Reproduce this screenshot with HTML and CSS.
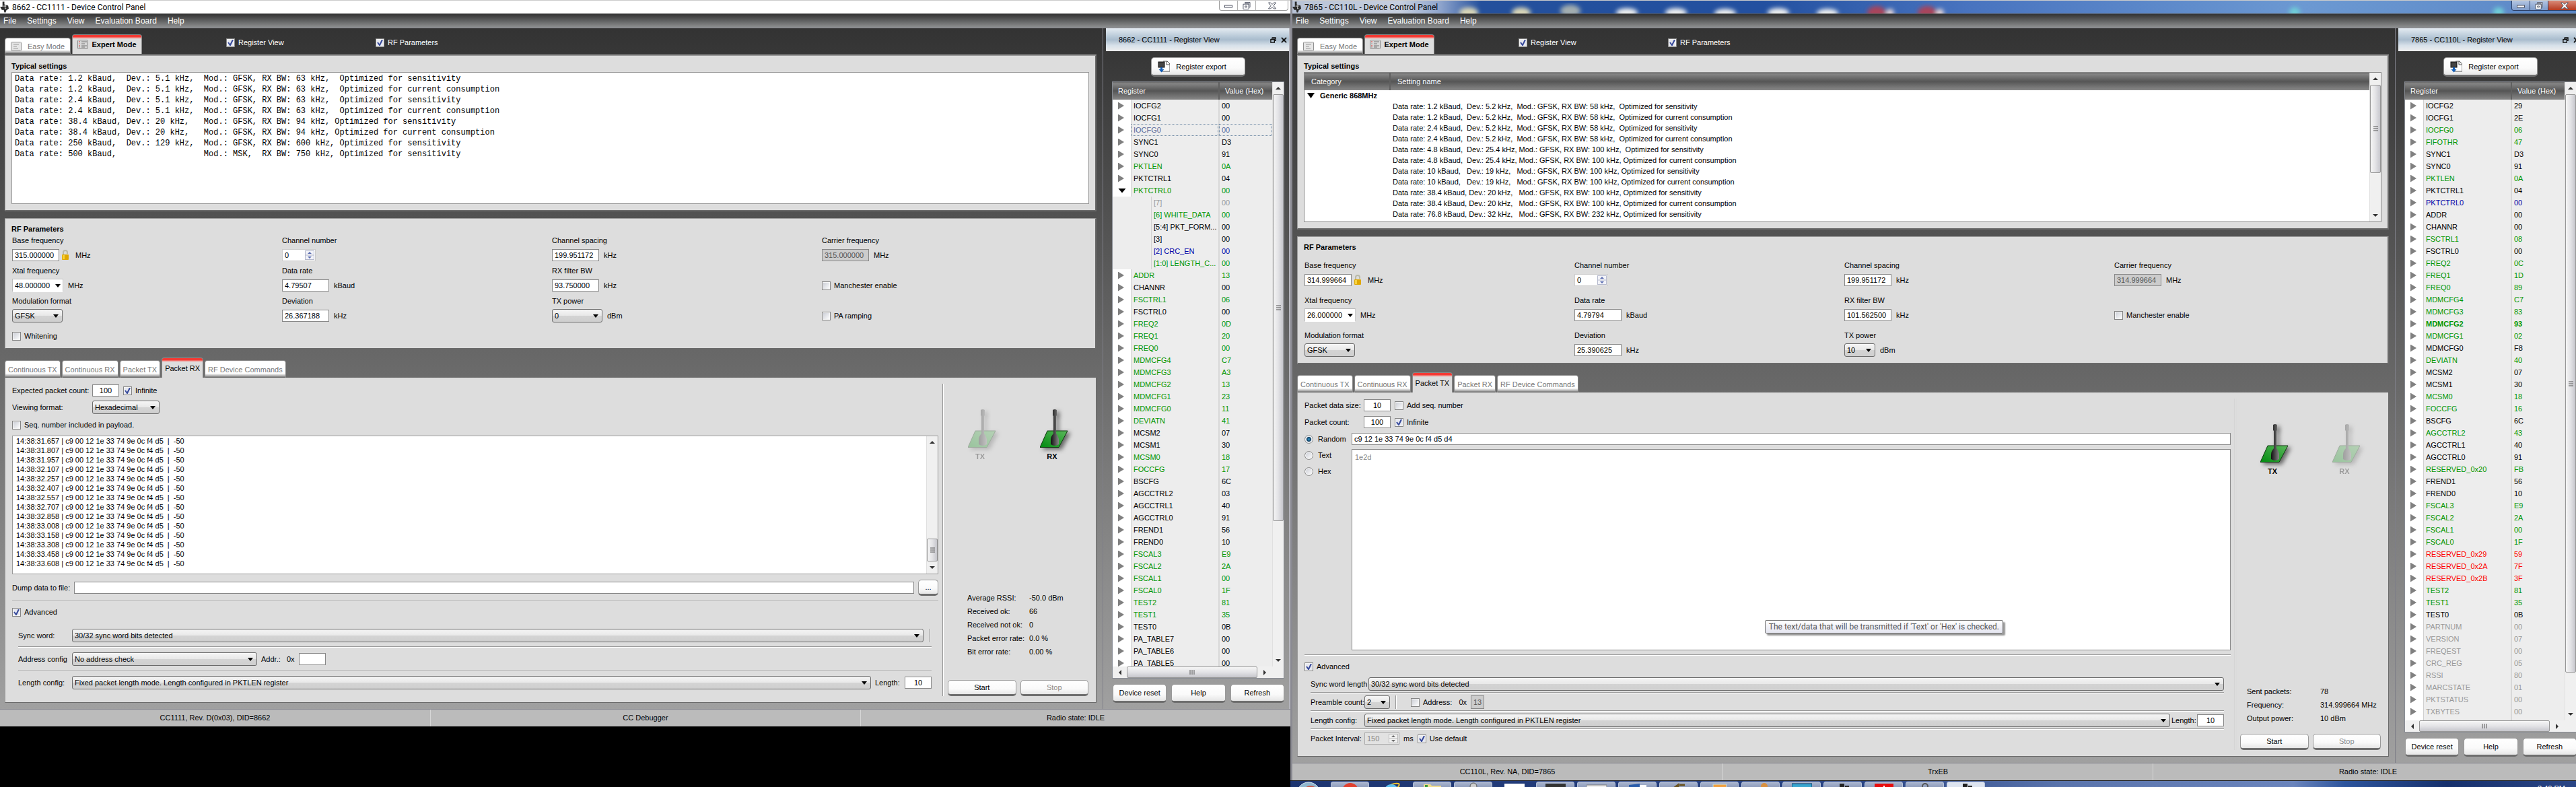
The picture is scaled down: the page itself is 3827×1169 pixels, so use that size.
FILE: index.html
```html
<!DOCTYPE html>
<html lang="en">
<head>
<meta charset="utf-8">
<title>Device Control Panel</title>
<link rel="stylesheet" href="styles.css">
</head>
<body>
<svg class="defs" aria-hidden="true">
  <defs>
    <linearGradient id="board" x1="0" y1="1" x2="1" y2="0"><stop offset="0" stop-color="#008a0e"/><stop offset="1" stop-color="#5cb85c"/></linearGradient>
    <linearGradient id="rod" x1="0" x2="1"><stop offset="0" stop-color="#111"/><stop offset=".6" stop-color="#555"/><stop offset="1" stop-color="#888"/></linearGradient>
    <filter id="soft"><feGaussianBlur stdDeviation="3"/></filter>
  </defs>
  <symbol id="ti" viewBox="0 0 14 17"><path d="M4 0h3v4l2 1 4 1 1 5-4 3-1 3H7l-1-4-3 0-3-5h4z" fill="#2b2b2b"/><path d="M7 5l2 0-1 6 2 0M5 7h5" stroke="#ddd" fill="none"/></symbol>
  <symbol id="easy" viewBox="0 0 16 14"><rect x=".5" y=".5" width="15" height="13" rx="1" fill="#e6e6e6" stroke="#909090"/><path d="M4 4h8M4 7h5M4 10h7" stroke="#999"/></symbol>
  <symbol id="expert" viewBox="0 0 16 14"><rect x=".5" y=".5" width="15" height="13" rx="1" fill="#d8d8d8" stroke="#8a8a8a"/><path d="M6 3h8M6 6h5M6 9h8M6 11h5" stroke="#777"/><path d="M2 3h2M2 9h2" stroke="#e03030"/><path d="M2 6h2M2 11h2" stroke="#999"/></symbol>
  <symbol id="lock" viewBox="0 0 12 16"><path d="M3 8V4a3 3 0 0 1 6 0v2" fill="none" stroke="#b9b9a8" stroke-width="2"/><rect x="1" y="7" width="10" height="8" rx="1" fill="#e0a800"/><rect x="2" y="8" width="3" height="6" fill="#f7d23c"/></symbol>
  <symbol id="export" viewBox="0 0 18 18"><path d="M8 1h6l4 4v11H6" fill="#fff" stroke="#555"/><path d="M13 1v5h5" fill="none" stroke="#555"/><rect x="1" y="2" width="9" height="8" fill="#444" stroke="#111"/><path d="M4 10h3v3h2.500l-4 4.500-4-4.500H4z" fill="#1560b8"/></symbol>
  <symbol id="antenna" viewBox="0 0 48 62"><path d="M0 56.500L11 32H41L28 56.500z" fill="url(#board)" stroke="#113a11"/><path d="M19 1q3-2 6 0v8l-1 1v26q4 5 4 10v6q-6 4-12 0v-6q0-6 4-10V10l-1-1z" fill="url(#rod)"/></symbol>
  <symbol id="restore" viewBox="0 0 10 10"><path d="M3 1h6v5H7M3 1v2M3 2h6" fill="none" stroke="#111" stroke-width="1.500"/><rect x="1" y="4" width="6" height="5" fill="none" stroke="#111" stroke-width="1.500"/></symbol>
  <symbol id="close" viewBox="0 0 10 10"><path d="M1 1l8 8M9 1l-8 8" stroke="#111" stroke-width="2"/></symbol>
  <symbol id="wmin" viewBox="0 0 12 10"><rect x=".5" y="4.500" width="11" height="3" fill="#fff" stroke="#4c5161"/></symbol>
  <symbol id="wmax" viewBox="0 0 12 12"><path d="M3.500.5h8v8h-2v-6h-6z" fill="#fff" stroke="#4c5161"/><path d="M.5 3.500h9v8h-9zM3.500 6.500h3v2h-3z" fill="#fff" stroke="#4c5161"/></symbol>
  <symbol id="wclose" viewBox="0 0 12 10"><path d="M.5.500h3L6 3 8.500.5h3L8 5l3.500 4.500h-3L6 7 3.500 9.500h-3L4 5z" fill="#fff" stroke="#4c5161"/></symbol>
</svg>

<div class="desktop">
<!-- First device: CC1111 -->
<section class="screen">
  <div class="window">
    <header class="titlebar">
      <svg class="logo"><use href="#ti"/></svg><h1>8662 - CC1111 - Device Control Panel</h1>
      <div class="winbtns"><button aria-label="Minimize"><svg><use href="#wmin"/></svg></button><button aria-label="Restore"><svg><use href="#wmax"/></svg></button><button class="x" aria-label="Close"><svg><use href="#wclose"/></svg></button></div>
    </header>
    <nav class="menubar"><a href="#">File</a><a href="#">Settings</a><a href="#">View</a><a href="#">Evaluation Board</a><a href="#">Help</a></nav>
    <div class="work">
      <main class="main">
        <div class="modes">
          <button class="tab"><svg><use href="#easy"/></svg>Easy Mode</button>
          <button class="tab on"><svg><use href="#expert"/></svg>Expert Mode</button>
          <label class="check"><input type="checkbox" checked>Register View</label>
          <label class="check"><input type="checkbox" checked>RF Parameters</label>
        </div>
        <section class="panel first">
          <h2>Typical settings</h2>
<pre class="list">Data rate: 1.2 kBaud,  Dev.: 5.1 kHz,  Mod.: GFSK, RX BW: 63 kHz,  Optimized for sensitivity
Data rate: 1.2 kBaud,  Dev.: 5.1 kHz,  Mod.: GFSK, RX BW: 63 kHz,  Optimized for current consumption
Data rate: 2.4 kBaud,  Dev.: 5.1 kHz,  Mod.: GFSK, RX BW: 63 kHz,  Optimized for sensitivity
Data rate: 2.4 kBaud,  Dev.: 5.1 kHz,  Mod.: GFSK, RX BW: 63 kHz,  Optimized for current consumption
Data rate: 38.4 kBaud, Dev.: 20 kHz,   Mod.: GFSK, RX BW: 94 kHz, Optimized for sensitivity
Data rate: 38.4 kBaud, Dev.: 20 kHz,   Mod.: GFSK, RX BW: 94 kHz, Optimized for current consumption
Data rate: 250 kBaud,  Dev.: 129 kHz,  Mod.: GFSK, RX BW: 600 kHz, Optimized for sensitivity
Data rate: 500 kBaud,                  Mod.: MSK,  RX BW: 750 kHz, Optimized for sensitivity</pre>
        </section>
        <section class="panel">
          <h2>RF Parameters</h2>
          <div class="params">
            <div class="field"><label for="a1">Base frequency</label><div><input id="a1" class="num" value="315.000000"><svg class="lock"><use href="#lock"/></svg>MHz</div></div>
            <div class="field"><label for="a2">Channel number</label><div><span class="spin"><input id="a2" value="0"><i></i></span></div></div>
            <div class="field"><label for="a3">Channel spacing</label><div><input id="a3" class="num" value="199.951172">kHz</div></div>
            <div class="field"><label for="a4">Carrier frequency</label><div><input id="a4" class="num" value="315.000000" disabled>MHz</div></div>
            <div class="field"><label for="a5">Xtal frequency</label><div><select id="a5" class="flat"><option>48.000000</option></select>MHz</div></div>
            <div class="field"><label for="a6">Data rate</label><div><input id="a6" class="num" value="4.79507">kBaud</div></div>
            <div class="field"><label for="a7">RX filter BW</label><div><input id="a7" class="num" value="93.750000">kHz</div></div>
            <div class="field end"><label class="check"><input type="checkbox">Manchester enable</label></div>
            <div class="field"><label for="a8">Modulation format</label><div><select id="a8" class="w75"><option>GFSK</option></select></div></div>
            <div class="field"><label for="a9">Deviation</label><div><input id="a9" class="num" value="26.367188">kHz</div></div>
            <div class="field"><label for="a10">TX power</label><div><select id="a10" class="w75"><option>0</option></select>dBm</div></div>
            <div class="field end"><label class="check"><input type="checkbox">PA ramping</label></div>
          </div>
          <label class="check whitening"><input type="checkbox">Whitening</label>
        </section>
        <div class="tabs"><button class="tab">Continuous TX</button><button class="tab">Continuous RX</button><button class="tab">Packet TX</button><button class="tab on">Packet RX</button><button class="tab">RF Device Commands</button></div>
        <section class="packet">
          <div class="form">
            <div class="row"><label class="l113" for="b1">Expected packet count:</label><input id="b1" class="short" value="100"><label class="check"><input type="checkbox" checked>Infinite</label></div>
            <div class="row t5"><label class="l113" for="b2">Viewing format:</label><select id="b2" class="w100"><option>Hexadecimal</option></select></div>
            <label class="check t8"><input type="checkbox">Seq. number included in payload.</label>
            <div class="log t8"><pre>14:38:31.657 | c9 00 12 1e 33 74 9e 0c f4 d5  |  -50
14:38:31.807 | c9 00 12 1e 33 74 9e 0c f4 d5  |  -50
14:38:31.957 | c9 00 12 1e 33 74 9e 0c f4 d5  |  -50
14:38:32.107 | c9 00 12 1e 33 74 9e 0c f4 d5  |  -50
14:38:32.257 | c9 00 12 1e 33 74 9e 0c f4 d5  |  -50
14:38:32.407 | c9 00 12 1e 33 74 9e 0c f4 d5  |  -50
14:38:32.557 | c9 00 12 1e 33 74 9e 0c f4 d5  |  -50
14:38:32.707 | c9 00 12 1e 33 74 9e 0c f4 d5  |  -50
14:38:32.858 | c9 00 12 1e 33 74 9e 0c f4 d5  |  -50
14:38:33.008 | c9 00 12 1e 33 74 9e 0c f4 d5  |  -50
14:38:33.158 | c9 00 12 1e 33 74 9e 0c f4 d5  |  -50
14:38:33.308 | c9 00 12 1e 33 74 9e 0c f4 d5  |  -50
14:38:33.458 | c9 00 12 1e 33 74 9e 0c f4 d5  |  -50
14:38:33.608 | c9 00 12 1e 33 74 9e 0c f4 d5  |  -50</pre><div class="vbar"><i class="up"></i><span style="flex-grow:92"></span><b style="flex-grow:22"></b><i class="down"></i></div></div>
            <div class="row t8 tall"><label class="l86" for="b3">Dump data to file:</label><input id="b3" class="grow"><button class="btn dots">...</button></div>
            <hr class="t6">
            <label class="check t8"><input type="checkbox" checked>Advanced</label>
            <div class="sub">
              <div class="row t17"><label class="l74" for="b4">Sync word:</label><select id="b4" class="grow"><option>30/32 sync word bits detected</option></select><span class="vr"></span></div>
              <hr class="t6">
              <div class="row t7"><label class="l74" for="b5">Address config</label><select id="b5" class="w275"><option>No address check</option></select><label for="b6">Addr.: &nbsp; 0x</label><input id="b6" class="short"></div>
              <hr class="t6">
              <div class="row t7"><label class="l74" for="b7">Length config:</label><select id="b7" class="grow"><option>Fixed packet length mode. Length configured in PKTLEN register</option></select><label for="b8" class="len">Length:</label><input id="b8" class="short" value="10"></div>
            </div>
          </div>
          <aside class="side">
            <div class="radios"><figure class="off"><svg><use href="#antenna"/></svg><figcaption>TX</figcaption></figure><figure><svg><use href="#antenna"/></svg><figcaption>RX</figcaption></figure></div>
            <dl class="stats rx"><dt>Average RSSI:</dt><dd>-50.0 dBm</dd><dt>Received ok:</dt><dd>66</dd><dt>Received not ok:</dt><dd>0</dd><dt>Packet error rate:</dt><dd>0.0 %</dd><dt>Bit error rate:</dt><dd>0.00 %</dd></dl>
            <div class="pair"><button class="btn">Start</button><button class="btn" disabled>Stop</button></div>
          </aside>
        </section>
      </main>
      <aside class="dock">
        <header><h2>8662 - CC1111 - Register View</h2><svg><use href="#restore"/></svg><svg><use href="#close"/></svg></header>
        <button class="btn export"><svg><use href="#export"/></svg>Register export</button>
        <div class="regs">
          <div class="regview"><table><thead><tr><th>Register</th><th>Value (Hex)</th></tr></thead><tbody id="regs-cc1111"></tbody></table></div>
          <div class="vbar"><i class="up"></i><b style="flex-grow:637"></b><span style="flex-grow:199"></span><i class="down"></i></div>
          <div class="hbar"><i class="left"></i><b></b><i class="right"></i></div>
        </div>
        <div class="trio"><button class="btn">Device reset</button><button class="btn">Help</button><button class="btn">Refresh</button></div>
      </aside>
    </div>
    <footer class="status"><span>CC1111, Rev. D(0x03), DID=8662</span><span>CC Debugger</span><span>Radio state: IDLE</span></footer>
  </div>
</section>

<!-- Second device: CC110L -->
<section class="screen second">
  <div class="window glass">
    <header class="titlebar">
      <svg class="blobs"><g filter="url(#soft)"><g fill="#d9d6b8"><ellipse cx="262" cy="18" rx="14" ry="8"/><ellipse cx="340" cy="18" rx="14" ry="8"/><ellipse cx="413" cy="15" rx="15" ry="9" opacity=".7"/></g><g fill="#eef0f0"><ellipse cx="497" cy="18" rx="16" ry="7"/><ellipse cx="570" cy="18" rx="16" ry="7"/><ellipse cx="643" cy="19" rx="16" ry="7"/><ellipse cx="722" cy="18" rx="16" ry="7"/><ellipse cx="795" cy="19" rx="16" ry="7"/></g><g fill="#a8455c"><ellipse cx="868" cy="18" rx="14" ry="10"/><ellipse cx="943" cy="18" rx="14" ry="10"/></g><g fill="#e8d8d8"><ellipse cx="888" cy="19" rx="6" ry="7"/><ellipse cx="962" cy="19" rx="6" ry="7"/></g><g fill="#6fd0d8"><ellipse cx="1489" cy="17" rx="8" ry="7"/><ellipse cx="1792" cy="17" rx="8" ry="7"/></g></g></svg>
      <svg class="logo"><use href="#ti"/></svg><h1>7865 - CC110L - Device Control Panel</h1>
      <div class="winbtns"><button aria-label="Minimize"><svg><use href="#wmin"/></svg></button><button aria-label="Restore"><svg><use href="#wmax"/></svg></button><button class="x" aria-label="Close"><svg><use href="#wclose"/></svg></button></div>
    </header>
    <nav class="menubar"><a href="#">File</a><a href="#">Settings</a><a href="#">View</a><a href="#">Evaluation Board</a><a href="#">Help</a></nav>
    <div class="work">
      <main class="main">
        <div class="modes">
          <button class="tab"><svg><use href="#easy"/></svg>Easy Mode</button>
          <button class="tab on"><svg><use href="#expert"/></svg>Expert Mode</button>
          <label class="check"><input type="checkbox" checked>Register View</label>
          <label class="check"><input type="checkbox" checked>RF Parameters</label>
        </div>
        <section class="panel first">
          <h2>Typical settings</h2>
          <div class="settings">
            <table>
              <thead><tr><th>Category</th><th>Setting name</th></tr></thead>
              <tbody>
                <tr class="cat"><td colspan="2"><i class="open"></i>Generic 868MHz</td></tr>
                <tr><td></td><td>Data rate: 1.2 kBaud,  Dev.: 5.2 kHz,  Mod.: GFSK, RX BW: 58 kHz,  Optimized for sensitivity</td></tr>
                <tr><td></td><td>Data rate: 1.2 kBaud,  Dev.: 5.2 kHz,  Mod.: GFSK, RX BW: 58 kHz,  Optimized for current consumption</td></tr>
                <tr><td></td><td>Data rate: 2.4 kBaud,  Dev.: 5.2 kHz,  Mod.: GFSK, RX BW: 58 kHz,  Optimized for sensitivity</td></tr>
                <tr><td></td><td>Data rate: 2.4 kBaud,  Dev.: 5.2 kHz,  Mod.: GFSK, RX BW: 58 kHz,  Optimized for current consumption</td></tr>
                <tr><td></td><td>Data rate: 4.8 kBaud,  Dev.: 25.4 kHz, Mod.: GFSK, RX BW: 100 kHz,  Optimized for sensitivity</td></tr>
                <tr><td></td><td>Data rate: 4.8 kBaud,  Dev.: 25.4 kHz, Mod.: GFSK, RX BW: 100 kHz, Optimized for current consumption</td></tr>
                <tr><td></td><td>Data rate: 10 kBaud,   Dev.: 19 kHz,   Mod.: GFSK, RX BW: 100 kHz, Optimized for sensitivity</td></tr>
                <tr><td></td><td>Data rate: 10 kBaud,   Dev.: 19 kHz,   Mod.: GFSK, RX BW: 100 kHz, Optimized for current consumption</td></tr>
                <tr><td></td><td>Data rate: 38.4 kBaud, Dev.: 20 kHz,   Mod.: GFSK, RX BW: 100 kHz, Optimized for sensitivity</td></tr>
                <tr><td></td><td>Data rate: 38.4 kBaud, Dev.: 20 kHz,   Mod.: GFSK, RX BW: 100 kHz, Optimized for current consumption</td></tr>
                <tr><td></td><td>Data rate: 76.8 kBaud, Dev.: 32 kHz,   Mod.: GFSK, RX BW: 232 kHz, Optimized for sensitivity</td></tr>
              </tbody>
            </table>
            <div class="vbar"><i class="up"></i><b style="flex-grow:130"></b><span style="flex-grow:55"></span><i class="down"></i></div>
          </div>
        </section>
        <section class="panel roomy">
          <h2>RF Parameters</h2>
          <div class="params">
            <div class="field"><label for="c1">Base frequency</label><div><input id="c1" class="num" value="314.999664"><svg class="lock"><use href="#lock"/></svg>MHz</div></div>
            <div class="field"><label for="c2">Channel number</label><div><span class="spin"><input id="c2" value="0"><i></i></span></div></div>
            <div class="field"><label for="c3">Channel spacing</label><div><input id="c3" class="num" value="199.951172">kHz</div></div>
            <div class="field"><label for="c4">Carrier frequency</label><div><input id="c4" class="num" value="314.999664" disabled>MHz</div></div>
            <div class="field"><label for="c5">Xtal frequency</label><div><select id="c5" class="flat"><option>26.000000</option></select>MHz</div></div>
            <div class="field"><label for="c6">Data rate</label><div><input id="c6" class="num" value="4.79794">kBaud</div></div>
            <div class="field"><label for="c7">RX filter BW</label><div><input id="c7" class="num" value="101.562500">kHz</div></div>
            <div class="field end"><label class="check"><input type="checkbox">Manchester enable</label></div>
            <div class="field"><label for="c8">Modulation format</label><div><select id="c8" class="w75"><option>GFSK</option></select></div></div>
            <div class="field"><label for="c9">Deviation</label><div><input id="c9" class="num" value="25.390625">kHz</div></div>
            <div class="field"><label for="c10">TX power</label><div><select id="c10" class="w46"><option>10</option></select>dBm</div></div>
          </div>
        </section>
        <div class="tabs"><button class="tab">Continuous TX</button><button class="tab">Continuous RX</button><button class="tab on">Packet TX</button><button class="tab">Packet RX</button><button class="tab">RF Device Commands</button></div>
        <section class="packet">
          <div class="form">
            <div class="row"><label class="l82" for="d1">Packet data size:</label><input id="d1" class="short" value="10"><label class="check"><input type="checkbox">Add seq. number</label></div>
            <div class="row t5"><label class="l82" for="d2">Packet count:</label><input id="d2" class="short" value="100"><label class="check"><input type="checkbox" checked>Infinite</label></div>
            <div class="source t5">
              <label class="check"><input type="radio" name="src" checked>Random</label><input class="grow" aria-label="Random data" value="c9 12 1e 33 74 9e 0c f4 d5 d4">
              <div class="kinds"><label class="check"><input type="radio" name="src">Text</label><label class="check"><input type="radio" name="src">Hex</label></div>
              <div class="area"><textarea aria-label="Packet data" disabled>1e2d</textarea><div class="tip" role="tooltip">The text/data that will be transmitted if 'Text' or 'Hex' is checked.</div></div>
            </div>
            <hr class="t6">
            <label class="check t8"><input type="checkbox" checked>Advanced</label>
            <div class="sub tx">
              <div class="row t8 snug"><label class="l86" for="d3">Sync word length</label><select id="d3" class="grow"><option>30/32 sync word bits detected</option></select></div>
              <hr class="t2">
              <div class="row t3"><label class="l74" for="d4">Preamble count:</label><select id="d4" class="w38"><option>2</option></select><span class="vr"></span><label class="check addr"><input type="checkbox">Address:</label><label for="d5">0x</label><input id="d5" class="hex" value="13" disabled></div>
              <hr class="t2">
              <div class="row t3 snug"><label class="l80" for="d6">Length config:</label><select id="d6" class="grow"><option>Fixed packet length mode. Length configured in PKTLEN register</option></select><label for="d7" class="len">Length:</label><input id="d7" class="short" value="10"></div>
              <hr class="t2">
              <div class="row t3"><label class="l74" for="d8">Packet Interval:</label><span class="spin off"><input id="d8" value="150" disabled><i></i></span><span>ms</span><label class="check"><input type="checkbox" checked>Use default</label></div>
            </div>
          </div>
          <aside class="side">
            <div class="radios"><figure><svg><use href="#antenna"/></svg><figcaption>TX</figcaption></figure><figure class="off"><svg><use href="#antenna"/></svg><figcaption>RX</figcaption></figure></div>
            <dl class="stats tx"><dt>Sent packets:</dt><dd>78</dd><dt>Frequency:</dt><dd>314.999664 MHz</dd><dt>Output power:</dt><dd>10 dBm</dd></dl>
            <div class="pair"><button class="btn">Start</button><button class="btn" disabled>Stop</button></div>
          </aside>
        </section>
      </main>
      <aside class="dock">
        <header><h2>7865 - CC110L - Register View</h2><svg><use href="#restore"/></svg><svg><use href="#close"/></svg></header>
        <button class="btn export"><svg><use href="#export"/></svg>Register export</button>
        <div class="regs">
          <div class="regview"><table><thead><tr><th>Register</th><th>Value (Hex)</th></tr></thead><tbody id="regs-cc110l"></tbody></table></div>
          <div class="vbar"><i class="up"></i><b style="flex-grow:862"></b><span style="flex-grow:53"></span><i class="down"></i></div>
          <div class="hbar"><i class="left"></i><b></b><i class="right"></i></div>
        </div>
        <div class="trio"><button class="btn">Device reset</button><button class="btn">Help</button><button class="btn">Refresh</button></div>
      </aside>
    </div>
    <footer class="status"><span>CC110L, Rev. NA, DID=7865</span><span>TrxEB</span><span>Radio state: IDLE</span></footer>
  </div>
  <nav class="taskbar" aria-label="Taskbar">
    <svg class="orb" viewBox="0 0 34 10"><circle cx="17" cy="19" r="17" fill="#8fb7cf" stroke="#dfe9f2"/><circle cx="20" cy="19" r="12" fill="#c8574a"/></svg>
    <button aria-label="Browser"><svg viewBox="0 0 30 8"><circle cx="15" cy="13" r="12" fill="#e0402f"/></svg></button>
    <button class="plain" aria-label="Internet"><svg viewBox="0 0 30 8"><path d="M6 12Q14 0 26 2q2 2-2 6" fill="none" stroke="#f3c52c" stroke-width="2"/><circle cx="15" cy="14" r="9" fill="none" stroke="#5cc0f0" stroke-width="4"/></svg></button>
    <button aria-label="Files"><svg viewBox="0 0 30 8"><path d="M2 3h10l2 2h14v5H2z" fill="#f0dc8c"/><path d="M4 4h4v4H4z" fill="#3b9a3b"/></svg></button>
    <button aria-label="Tools"><svg viewBox="0 0 30 8"><circle cx="15" cy="6" r="5" fill="#ccc" stroke="#555"/></svg></button>
    <button class="plain" aria-label="Document"><svg viewBox="0 0 30 8"><rect y="2" width="30" height="8" fill="#fff"/></svg></button>
    <button aria-label="Terminal"><svg viewBox="0 0 30 8"><rect y="2" width="30" height="8" fill="#333"/></svg></button>
    <button aria-label="Notes"><svg viewBox="0 0 30 8"><rect y="4" width="30" height="6" fill="#eee" stroke="#777"/></svg></button>
    <button aria-label="Word"><svg viewBox="0 0 30 8"><path d="M2 4l16-2v8H2z" fill="#2a5caa"/><rect x="18" y="4" width="10" height="6" fill="#fff"/></svg></button>
    <button aria-label="Editor"><svg viewBox="0 0 30 8"><path d="M6 10l8-6v6M16 4h8" stroke="#6a5320" stroke-width="3" fill="none"/></svg></button>
    <button aria-label="Viewer"><svg viewBox="0 0 30 8"><rect x="5" y="3" width="20" height="7" fill="#f0a040" stroke="#bde"/></svg></button>
    <button aria-label="Paint"><svg viewBox="0 0 30 8"><circle cx="20" cy="6" r="5" fill="#d89040"/></svg></button>
    <button aria-label="Remote"><svg viewBox="0 0 30 8"><rect y="2" width="30" height="8" fill="#39a6d0" stroke="#036"/></svg></button>
    <button aria-label="Studio"><svg viewBox="0 0 30 8"><path d="M10 2h7v8h-7zM18 5h6v5h-6z" fill="#222"/></svg></button>
    <button aria-label="Reader"><svg viewBox="0 0 30 8"><rect x="1" y="2" width="28" height="8" fill="#e80c0c"/><path d="M14 8V5h2v3" fill="#fff"/></svg></button>
    <button aria-label="Security"><svg viewBox="0 0 30 8"><circle cx="15" cy="6" r="4" fill="none" stroke="#555" stroke-width="2"/></svg></button>
    <button class="cur" aria-label="Studio, active"><svg viewBox="0 0 30 8"><path d="M10 2h7v8h-7zM18 5h6v5h-6z" fill="#222"/></svg></button>
    <time>3:40 PM</time>
  </nav>
</section>
</div>
<script src="registers.js"></script>
</body>
</html>
```
FILE: styles.css
```css
* { box-sizing: border-box; }
body { margin: 0; background: #000; color: #000; font: 11px/16px "Liberation Sans", Arial, sans-serif; }
h1, h2, pre, dl, dd, figure { margin: 0; font: inherit; }
button, input, select, textarea { font: inherit; color: inherit; margin: 0; border-radius: 0; }
button { padding: 0; border: 0; background: none; }
a { color: inherit; text-decoration: none; }
i { display: block; flex: none; }
svg { flex: none; display: block; }
.defs { position: absolute; width: 0; height: 0; }

.desktop { display: grid; grid-template-columns: 1917fr 1910fr; min-height: 100vh; }
.screen { display: flex; flex-direction: column; align-items: flex-start; min-width: 0; overflow: hidden; }
.window { width: 100%; display: flex; flex-direction: column; }
.second .window { flex: 1; width: calc(100% + 10px); border-left: 3px solid #8a8a92; }

/* Title bar */
.titlebar { position: relative; display: flex; align-items: center; gap: 5px; height: 20px; background: #fff; border-top: 1px solid #ccc; }
.titlebar h1 { flex: 1; font: 12px/18px Roboto, "Noto Sans", sans-serif; position: relative; }
.logo { width: 13px; height: 17px; position: relative; }
.winbtns { align-self: flex-start; display: flex; height: 15px; margin-right: 3px; position: relative; border: 1px solid #9a9a9a; border-top: 0; border-radius: 0 0 4px 4px; overflow: hidden; }
.winbtns button { width: 27px; display: grid; place-items: center; border-right: 1px solid #b0b0b0; }
.winbtns svg { width: 12px; height: 11px; }
.winbtns .x { width: 47px; border: 0; }
.glass .titlebar { background: linear-gradient(90deg, #b9c3d6, #c6cfdf 160px, #8ea4cc 220px, #24509c 280px, #2350a0 700px, #4873bf 1000px, #6c99d2 1500px, #5b87c6); }
.glass .winbtns button { background: linear-gradient(#b4c6e2, #7e9bc9); border-color: #2c3f66; }
.glass .winbtns { border-color: #2c3f66; }
.glass .winbtns .x { background: linear-gradient(#d98a78, #b53a20); }
.blobs { position: absolute; inset: 0; width: 100%; height: 100%; }

.menubar { display: flex; gap: 16px; height: 22px; padding-left: 5px; line-height: 20px; border-top: 1px solid #555; border-bottom: 1px solid #86868e; background: linear-gradient(#333, #8f9192); color: #fff; font-size: 12px; }

/* Work area */
.work { flex: 1; display: grid; grid-template-columns: 1fr 278px; background: linear-gradient(#333, #6a6a6a 50%, #a0a0a0); }
.main { display: flex; flex-direction: column; min-width: 0; padding: 10px 9px 9px 7px; border-right: 1px solid #7e7e88; }
.modes, .tabs { display: flex; align-items: flex-end; gap: 2px; }
.modes { border-bottom: 2px solid #6a6a6a; color: #fff; height: 30px; }
.modes .check { width: 220px; padding-bottom: 9px; }
.modes .tab + .check { margin-left: 123px; }
.tab { display: flex; align-items: center; justify-content: center; gap: 9px; height: 26px; padding: 0 4px; color: #777; background: linear-gradient(#fff 75%, #aaa 90%, #555); border: 1px solid #888; border-bottom: 0; border-radius: 4px 4px 0 0; white-space: nowrap; }
.modes .tab { width: 98px; height: 24px; }
.modes .tab.on { width: 104px; height: 29px; font-weight: bold; gap: 5px; }
.tab.on { height: 30px; color: #000; background: linear-gradient(#f43a34 3px, #ef9a96 4px, #ddd 6px); }
.tab svg { width: 16px; height: 14px; }

.panel { background: #ddd; border: 1px solid #9c9c9c; border-right: 2px solid #6a6a6a; border-bottom: 2px solid #6a6a6a; padding: 7px 9px 9px; margin-top: 10px; }
.panel.first { margin-top: 0; }
.panel h2 { font-weight: bold; margin-bottom: 1px; }
.list { height: 196px; padding: 1px 4px; background: #fff; border: 1px solid #999; font: 12px/16px "Liberation Mono", "Courier New", monospace; overflow: hidden; }

.params { display: grid; grid-template-columns: repeat(4, 1fr); row-gap: 5px; margin: 0 -4px 0 1px; }
.roomy .params { row-gap: 12px; padding-top: 10px; }
.field { display: flex; flex-direction: column; gap: 4px; }
.field.end { justify-content: flex-end; }
.field > label:first-child:not(.check) { height: 16px; }
.field > div { display: flex; align-items: center; gap: 7px; height: 20px; }
.field > .check { height: 20px; }
.whitening { margin: 12px 0 1px 1px; }

/* Controls */
input:not([type]), textarea { height: 18px; padding: 0 3px; background: #fff; border: 1px solid #888; min-width: 0; }
input:not([type]):disabled { background: #ccc; color: #555; }
.num { width: 70px; }
.short { width: 40px; text-align: center; }
input.hex { width: 20px; height: 20px; padding: 0; text-align: center; }
.lock { width: 12px; height: 16px; margin: 0 2px 0 -4px; }
select { appearance: none; height: 20px; padding: 0 16px 0 3px; border: 1px solid #6b6b6b; border-radius: 3px; min-width: 0;
  background: url("data:image/svg+xml,%3Csvg xmlns='http://www.w3.org/2000/svg' width='8' height='5'%3E%3Cpath d='M0 0h8L4 5z'/%3E%3C/svg%3E") no-repeat right 5px center, linear-gradient(#f5f5f5, #e8e8e8 50%, #d4d4d4 50%, #cfcfcf); }
select.flat { width: 76px; border-color: #bbb #ccc #fff #bbb; border-radius: 0; background: #fff url("data:image/svg+xml,%3Csvg xmlns='http://www.w3.org/2000/svg' width='8' height='5'%3E%3Cpath d='M0 0h8L4 5z'/%3E%3C/svg%3E") no-repeat right 3px center; }
.w38 { width: 38px; } .w46 { width: 46px; } .w75 { width: 75px; } .w100 { width: 100px; } .w275 { width: 275px; }
.grow { flex: 1; }
.spin { display: flex; align-items: center; width: 50px; height: 18px; background: #fff; border: 1px solid #ccc; }
.spin input:not([type]) { flex: 1; border: 0; height: 16px; background: none; }
.spin i { width: 14px; height: 14px; margin-right: 1px; border: 1px solid #b5b9cc; background: url("data:image/svg+xml,%3Csvg xmlns='http://www.w3.org/2000/svg' width='12' height='12'%3E%3Cpath d='M6 1l3 3H3zM6 11l3-3H3z' fill='%235a6cb0'/%3E%3Cpath d='M0 6h12' stroke='%23b5b9cc'/%3E%3C/svg%3E") #f1f2f8; }
.spin.off { width: 52px; background: #e2e2e2; border-color: #aaa; }
.spin.off input:not([type]) { color: #888; }
.spin.off i { filter: grayscale(1); }

.check { display: flex; align-items: center; gap: 5px; white-space: nowrap; }
.check input { appearance: none; width: 13px; height: 13px; flex: none; border: 1px solid #858585; background: linear-gradient(135deg, #c9ccd4, #fff); box-shadow: inset 0 0 0 1px #f4f4f4; }
.check input:checked { background: url("data:image/svg+xml,%3Csvg xmlns='http://www.w3.org/2000/svg' width='11' height='11'%3E%3Cpath d='M2 5l3 4 4-8' fill='none' stroke='%2335489a' stroke-width='2'/%3E%3C/svg%3E") #e6e8f0; }
.check input[type=radio] { border-radius: 50%; border-color: #8c8c8c; margin-right: 2px; }
.check input[type=radio]:checked { background: radial-gradient(circle, #35a0d8, #0d3a5c 3px, #dfe6ee 4px); }

.btn { display: flex; align-items: center; justify-content: center; height: 24px; border: 1px solid #999; border-bottom: 3px solid #6e6e6e; border-radius: 5px; background: linear-gradient(#fff, #fafafa 60%, #e6e6e6); white-space: nowrap; }
.btn:disabled { color: #8a8a8a; }
.dots { width: 30px; }

/* Packet panel */
.tabs { margin-top: 12px; }
.packet { flex: 1; display: flex; background: #ddd; border: solid #6a6a6a; border-width: 0 1px 1px 0; border-left: 1px solid #999; padding: 9px 0 9px 10px; }
.form { flex: 1; display: flex; flex-direction: column; min-width: 0; padding-right: 6px; }
.row { display: flex; align-items: center; gap: 6px; height: 20px; white-space: nowrap; }
.row.tall { height: 24px; }
.row.snug { gap: 0; }
.t2 { margin-top: 2px; } .t3 { margin-top: 3px; } .t5 { margin-top: 5px; } .t6 { margin-top: 6px; } .t7 { margin-top: 7px; } .t8 { margin-top: 8px; } .t17 { margin-top: 17px; }
.l74 { width: 74px; flex: none; } .l80 { width: 80px; flex: none; } .l82 { width: 82px; flex: none; } .l86 { width: 86px; flex: none; } .l113 { width: 113px; flex: none; }
.len { width: 38px; }
.snug .len { width: 40px; padding-left: 2px; }
.form hr { width: 100%; height: 2px; margin-bottom: 0; border: 0; border-top: 1px solid #999; background: #fff; flex: none; }
.sub { padding: 0 10px 10px 9px; }
.sub.tx { padding-bottom: 7px; }
.vr { width: 2px; height: 20px; border-left: 1px solid #999; background: #fff; margin: 0 2px; }
.addr { margin-left: 13px; margin-right: 4px; }
.log { display: flex; height: 206px; background: #fff; border: 1px solid #999; }
.log pre { flex: 1; font: 11px/14px "Liberation Sans", Arial, sans-serif; padding-left: 5px; }
.source { flex: 1; display: grid; grid-template: 20px 1fr / 64px 1fr; gap: 5px 6px; min-height: 120px; }
.source > input { align-self: center; }
.kinds { display: grid; gap: 8px; align-content: start; padding-top: 1px; }
.area { position: relative; display: flex; }
.area textarea { flex: 1; height: auto; padding: 3px 4px; resize: none; color: #888; }
.tip { position: absolute; left: 47%; bottom: 25px; height: 20px; padding: 0 5px; border: 1px solid #767676; border-radius: 2px; background: linear-gradient(#fff, #e4e5f0); color: #575757; font: 12px/18px Roboto, "Noto Sans", sans-serif; box-shadow: 3px 3px 2px #999; white-space: nowrap; }

.side { width: 228px; flex: none; display: flex; flex-direction: column; padding: 0 11px 0 7px; border-left: 1px solid #999; box-shadow: inset 1px 0 #fff; }
.radios { display: flex; gap: 59px; padding: 38px 0 0 30px; }
.radios figure { width: 48px; }
.radios svg { width: 48px; height: 62px; filter: drop-shadow(4px 3px 3px #666); }
.radios figcaption { width: 36px; text-align: center; font-weight: bold; }
.radios .off { opacity: .3; }
.stats { margin-top: auto; display: grid; line-height: 20px; white-space: nowrap; }
.stats.rx { grid-template-columns: 92px 1fr; padding-left: 29px; margin-bottom: 32px; }
.stats.tx { grid-template-columns: 109px 1fr; padding-left: 10px; margin-bottom: 13px; }
.pair { display: grid; grid-template-columns: 1fr 1fr; gap: 6px; }

/* Scroll bars */
.vbar { width: 17px; flex: none; display: flex; flex-direction: column; background: #f0f0f0; border-left: 1px solid #e0e0e0; }
.vbar b, .hbar b { border: 1px solid #979797; border-radius: 2px; }
.vbar b { background: url("data:image/svg+xml,%3Csvg xmlns='http://www.w3.org/2000/svg' width='7' height='8'%3E%3Cpath d='M0 1h7M0 4h7M0 7h7' stroke='%23555'/%3E%3C/svg%3E") no-repeat center, linear-gradient(90deg, #f5f5f5, #e3e3e6 50%, #c6c6cc); }
.hbar b { flex: 1; background: url("data:image/svg+xml,%3Csvg xmlns='http://www.w3.org/2000/svg' width='8' height='7'%3E%3Cpath d='M1 0v7M4 0v7M7 0v7' stroke='%23555'/%3E%3C/svg%3E") no-repeat center, linear-gradient(#f5f5f5, #e3e3e6 50%, #c6c6cc); }
.hbar { display: flex; height: 17px; background: #f0f0f0; margin-right: 18px; }
.hbar i { width: 21px; }
.vbar i { height: 18px; }
.up, .down, .left, .right { display: grid; place-items: center; }
.up::before, .down::before, .left::before, .right::before { content: ""; border: 4px solid transparent; }
.up::before { border-width: 0 4px 4px; border-bottom-color: #333; }
.down::before { border-width: 4px 4px 0; border-top-color: #333; }
.left::before { border-width: 4px 4px 4px 0; border-right-color: #333; }
.right::before { border-width: 4px 0 4px 4px; border-left-color: #333; }

/* Settings table */
table { border-collapse: collapse; table-layout: fixed; width: 100%; }
th { font-weight: normal; text-align: left; color: #fff; background: linear-gradient(#6a6a6a, #858585 2px, #555 50%, #888); }
th + th { border-left: 2px solid #606060; }
td, th { padding: 0; white-space: pre; overflow: hidden; }
.settings { display: flex; align-items: flex-start; height: 223px; background: #fff; border: 1px solid #888; overflow: hidden; }
.settings .vbar { align-self: stretch; }
.settings table { flex: 1; }
.settings th { height: 26px; padding-left: 10px; }
.settings th:first-child { width: 127px; }
.settings td { height: 16px; padding-left: 4px; }
.settings .cat td { font-weight: bold; }
.open { display: inline-block; width: 11px; height: 8px; margin-right: 8px; background: #000; clip-path: polygon(0 0, 100% 0, 50% 100%); }

/* Register dock */
.dock { display: flex; flex-direction: column; padding: 0 0 9px 4px; border-right: 2px solid #b4b4bc; }
.dock header { display: flex; align-items: center; gap: 7px; height: 34px; padding: 0 3px 0 19px; background: linear-gradient(#e4ebf2, #b9cad8 35%, #a9bccd 50%, #d7e1ea 75%, #eee); }
.dock header h2 { flex: 1; }
.dock header svg { width: 9px; height: 9px; }
.export { width: 140px; height: 29px; margin: 9px 0 7px 67px; gap: 9px; padding-right: 18px; }
.export svg { width: 18px; height: 18px; }
.regs { flex: 1; display: grid; grid-template: 1fr 17px / 1fr 17px; margin: 0 7px 0 9px; border: 1px solid #888c94; background: #f0f0f0; min-height: 0; }
.regview { contain: size; overflow: hidden; background: #ededed; }
.regs .hbar { grid-column: 1 / -1; }
.regs th { height: 26px; padding-left: 8px; }
.regs th:first-child { width: 158px; }
.regs td { height: 18px; padding-left: 3px; }
.regs td + td { border-left: 2px solid #d8d8d8; }
.regs .name { display: flex; gap: 3px; height: 18px; line-height: 18px; margin-left: -3px; }
.gutter { width: 28px; flex: none; background: #fff; border-right: 1px solid #d0d0d0; display: grid; place-items: center start; padding-left: 8px; }
.child .gutter { width: 58px; background: none; }
.gutter::before { content: ""; width: 9px; height: 11px; background: #808080; clip-path: polygon(0 0, 100% 50%, 0 100%); }
.child .gutter::before { content: none; }
.expanded .gutter::before { width: 12px; height: 7px; background: #000; clip-path: polygon(0 0, 100% 0, 50% 100%); }
.g { color: #009600; } .b { color: #0000a8; } .x { color: #999; } .r { color: #f00; } .bold { font-weight: bold; }
.sel { color: #5a6a9c; }
.sel .label { flex: 1; outline: 1px dotted #6d88a4; outline-offset: -1px; margin-left: -3px; padding-left: 3px; }
.sel td + td { outline: 1px dotted #6d88a4; outline-offset: -1px; }
.trio { display: grid; grid-template-columns: repeat(3, 1fr); gap: 7px; margin: 8px 7px 0 10px; }
.trio .btn { height: 28px; }

.status { display: grid; grid-template-columns: repeat(3, 1fr); height: 26px; border-top: 1px solid #86868e; background: #bbb; text-align: center; line-height: 25px; }
.status span + span { border-left: 1px solid #d6d6d6; }

.taskbar { width: 100%; height: 10px; flex: none; display: flex; gap: 4px; overflow: hidden; padding-left: 10px; border-top: 1px solid #222; background: linear-gradient(90deg, #1c3470, #2a4585 45%, #5a74ac 60%, #6a84bc 78%, #2c549c 82%, #16306c 90%, #2a4585); }
.taskbar button { width: 57px; height: 20px; margin-top: 1px; border: 1px solid #b8c4dc; border-radius: 3px; background: linear-gradient(#a9b5cf, #66779f); display: flex; justify-content: center; }
.taskbar .plain { background: none; border-color: transparent; }
.taskbar .cur { background: #dde4f0; }
.taskbar button svg { width: 30px; height: 8px; }
.orb { width: 34px; height: 10px; margin-right: 12px; }
.taskbar time { margin: 3px 16px 0 auto; color: #fff; }
```
FILE: registers.js
```js
// Register map: name, value, colour class and extra row state ("~" stands for a space).
var maps = {
  "regs-cc1111": "IOCFG2 00,IOCFG1 00,IOCFG0 00 sel,SYNC1 D3,SYNC0 91,PKTLEN 0A g,PKTCTRL1 04,PKTCTRL0 00 g+expanded,[7] 00 x+child,[6]~WHITE_DATA 00 g+child,[5:4]~PKT_FORM... 00 child,[3] 00 child,[2]~CRC_EN 00 b+child,[1:0]~LENGTH_C... 00 g+child,ADDR 13 g,CHANNR 00,FSCTRL1 06 g,FSCTRL0 00,FREQ2 0D g,FREQ1 20 g,FREQ0 00 g,MDMCFG4 C7 g,MDMCFG3 A3 g,MDMCFG2 13 g,MDMCFG1 23 g,MDMCFG0 11 g,DEVIATN 41 g,MCSM2 07,MCSM1 30,MCSM0 18 g,FOCCFG 17 g,BSCFG 6C,AGCCTRL2 03,AGCCTRL1 40,AGCCTRL0 91,FREND1 56,FREND0 10,FSCAL3 E9 g,FSCAL2 2A g,FSCAL1 00 g,FSCAL0 1F g,TEST2 81 g,TEST1 35 g,TEST0 0B,PA_TABLE7 00,PA_TABLE6 00,PA_TABLE5 00",
  "regs-cc110l": "IOCFG2 29,IOCFG1 2E,IOCFG0 06 g,FIFOTHR 47 g,SYNC1 D3,SYNC0 91,PKTLEN 0A g,PKTCTRL1 04,PKTCTRL0 00 b,ADDR 00,CHANNR 00,FSCTRL1 08 g,FSCTRL0 00,FREQ2 0C g,FREQ1 1D g,FREQ0 89 g,MDMCFG4 C7 g,MDMCFG3 83 g,MDMCFG2 93 g+bold,MDMCFG1 02 g,MDMCFG0 F8,DEVIATN 40 g,MCSM2 07,MCSM1 30,MCSM0 18 g,FOCCFG 16 g,BSCFG 6C,AGCCTRL2 43 g,AGCCTRL1 40,AGCCTRL0 91,RESERVED_0x20 FB g,FREND1 56,FREND0 10,FSCAL3 E9 g,FSCAL2 2A g,FSCAL1 00 g,FSCAL0 1F g,RESERVED_0x29 59 r,RESERVED_0x2A 7F r,RESERVED_0x2B 3F r,TEST2 81 g,TEST1 35 g,TEST0 0B,PARTNUM 00 x,VERSION 07 x,FREQEST 00 x,CRC_REG 05 x,RSSI 80 x,MARCSTATE 01 x,PKTSTATUS 00 x,TXBYTES 00 x,RXBYTES 00 x"
};
Object.keys(maps).forEach(function (id) {
  document.getElementById(id).innerHTML = maps[id].split(",").map(function (r) {
    var p = r.split(" ");
    return '<tr class="' + (p[2] || "").replace(/\+/g, " ") + '"><td><div class="name"><span class="gutter"></span><span class="label">' +
      p[0].replace("~", " ") + "</span></div></td><td>" + p[1] + "</td></tr>";
  }).join("");
});
```
